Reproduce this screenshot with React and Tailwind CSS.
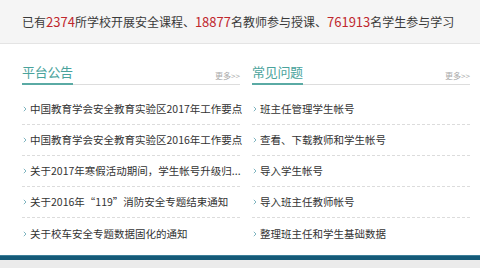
import React from "react";

const notices = [
  "中国教育学会安全教育实验区2017年工作要点",
  "中国教育学会安全教育实验区2016年工作要点",
  "关于2017年寒假活动期间，学生帐号升级归...",
  "关于2016年“119”消防安全专题结束通知",
  "关于校车安全专题数据固化的通知",
];
const faqs = [
  "班主任管理学生帐号",
  "查看、下载教师和学生帐号",
  "导入学生帐号",
  "导入班主任教师帐号",
  "整理班主任和学生基础数据",
];

function Chevron() {
  return (
    <svg width="4" height="6" viewBox="0 0 4 6" className="shrink-0">
      <polyline points="0.8,0.8 3,3 0.8,5.2" fill="none" stroke="#7fb5c0" strokeWidth="1" />
    </svg>
  );
}

function Column({ title, items }) {
  return (
    <div className="w-[218px]">
      <div className="flex justify-between items-start border-b border-[#dddddd]">
        <div className="text-[13px] leading-[20px] text-[#4aa39c] pb-px border-b-2 border-[#5aaaa4] -mb-px tracking-[-0.3px]">
          {title}
        </div>
        <div className="text-[8px] leading-[10px] text-[#aaaaaa] mt-[9px]">更多&gt;&gt;</div>
      </div>
      <ul className="mt-[9px]">
        {items.map((t, i) => (
          <li
            key={i}
            className={
              "h-[31px] flex items-center gap-[3px] pl-px text-[10.5px] text-[#333333] whitespace-nowrap " +
              (i < items.length - 1 ? "border-b border-dashed border-[#dcdcdc]" : "")
            }
          >
            <Chevron />
            <span>{t}</span>
          </li>
        ))}
      </ul>
    </div>
  );
}

export default function App() {
  return (
    <div
      className="w-[480px] h-[268px] bg-white flex flex-col overflow-hidden"
      style={{ fontFamily: '"Noto Sans CJK SC", "Noto Sans", sans-serif' }}
    >
      <div className="h-[44px] shrink-0 bg-[#f5f5f5] border-b border-[#e4e4e4] flex items-center pl-[22px] text-[12px] text-[#3a3a3a] whitespace-nowrap">
        <span>
          已有<span className="text-[13px] text-[#c0272d]">2374</span>所学校开展安全课程、
          <span className="text-[13px] text-[#c0272d]">18877</span>名教师参与授课、
          <span className="text-[13px] text-[#c0272d]">761913</span>名学生参与学习
        </span>
      </div>
      <div className="flex gap-[12px] pl-[22px] pt-[18px]">
        <Column title="平台公告" items={notices} />
        <Column title="常见问题" items={faqs} />
      </div>
      <div className="mt-auto h-[13px] shrink-0 flex flex-col">
        <div className="h-px bg-[#3d7f99]" />
        <div className="h-[4px] bg-[#155a78]" />
        <div className="flex-1 bg-[#ebebeb]" />
      </div>
    </div>
  );
}
